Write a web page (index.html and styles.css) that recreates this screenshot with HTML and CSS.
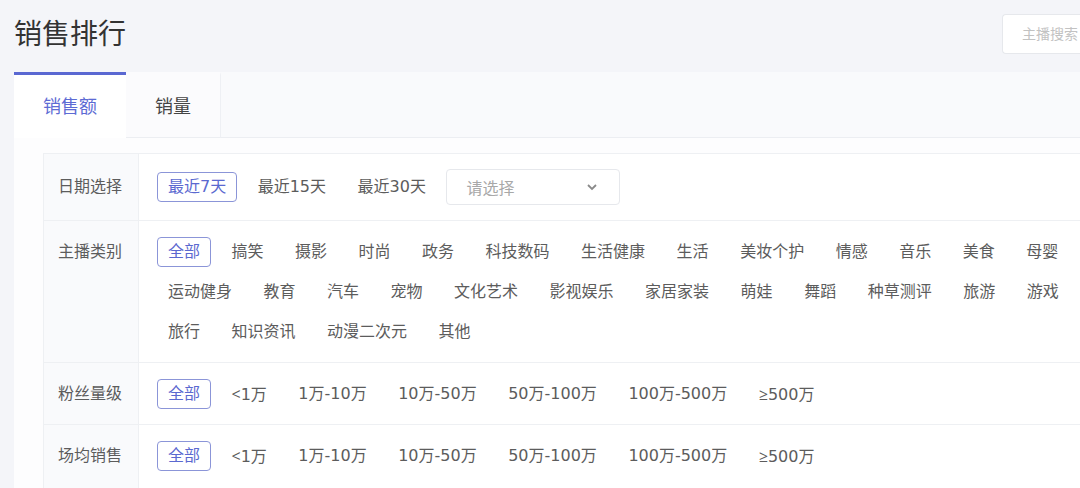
FILE: index.html
```html
<!DOCTYPE html>
<html lang="zh-CN">
<head>
    <meta charset="UTF-8">
    <meta name="viewport" content="width=device-width, initial-scale=1.0">
    <title>销售排行</title>
    <link rel="stylesheet" href="styles.css">
</head>
<body>
    <div class="page">
        <div class="header">
            <h1>销售排行</h1>
            <div class="search">主播搜索</div>
        </div>

        <div class="panel">
            <div class="tabs">
                <div class="tab active">销售额</div>
                <div class="tab">销量</div>
            </div>

            <div class="panel-body">
                <div class="filters">
                    <div class="row row-date">
                        <div class="label">日期选择</div>
                        <div class="options">
                            <span class="chip active">最近7天</span>
                            <span class="chip">最近15天</span>
                            <span class="chip">最近30天</span>
                            <div class="select">
                                <span>请选择</span>
                                <svg width="12" height="12" viewBox="0 0 12 12">
                                    <polyline points="2,4 6,8 10,4" fill="none" stroke="#8a8a8a" stroke-width="1.8"/>
                                </svg>
                            </div>
                        </div>
                    </div>
                    <div class="row">
                        <div class="label">主播类别</div>
                        <div class="options">
                            <span class="chip active">全部</span>
                            <span class="chip">搞笑</span>
                            <span class="chip">摄影</span>
                            <span class="chip">时尚</span>
                            <span class="chip">政务</span>
                            <span class="chip">科技数码</span>
                            <span class="chip">生活健康</span>
                            <span class="chip">生活</span>
                            <span class="chip">美妆个护</span>
                            <span class="chip">情感</span>
                            <span class="chip">音乐</span>
                            <span class="chip">美食</span>
                            <span class="chip">母婴</span>
                            <span class="chip">运动健身</span>
                            <span class="chip">教育</span>
                            <span class="chip">汽车</span>
                            <span class="chip">宠物</span>
                            <span class="chip">文化艺术</span>
                            <span class="chip">影视娱乐</span>
                            <span class="chip">家居家装</span>
                            <span class="chip">萌娃</span>
                            <span class="chip">舞蹈</span>
                            <span class="chip">种草测评</span>
                            <span class="chip">旅游</span>
                            <span class="chip">游戏</span>
                            <span class="chip">旅行</span>
                            <span class="chip">知识资讯</span>
                            <span class="chip">动漫二次元</span>
                            <span class="chip">其他</span>
                        </div>
                    </div>
                    <div class="row">
                        <div class="label">粉丝量级</div>
                        <div class="options">
                            <span class="chip active">全部</span>
                            <span class="chip"><span class="sym">&lt;</span>1万</span>
                            <span class="chip">1万-10万</span>
                            <span class="chip">10万-50万</span>
                            <span class="chip">50万-100万</span>
                            <span class="chip">100万-500万</span>
                            <span class="chip"><span class="sym">≥</span>500万</span>
                        </div>
                    </div>
                    <div class="row">
                        <div class="label">场均销售</div>
                        <div class="options">
                            <span class="chip active">全部</span>
                            <span class="chip"><span class="sym">&lt;</span>1万</span>
                            <span class="chip">1万-10万</span>
                            <span class="chip">10万-50万</span>
                            <span class="chip">50万-100万</span>
                            <span class="chip">100万-500万</span>
                            <span class="chip"><span class="sym">≥</span>500万</span>
                        </div>
                    </div>
                </div>
            </div>
        </div>
    </div>
</body>
</html>
```

FILE: styles.css
```css
body {
    margin: 0;
    background-color: #f4f5f9;
    font-family: "DejaVu Sans", "Noto Sans CJK SC", sans-serif;
    color: #5c5c5c;
    overflow: hidden;
}

.page {
    width: 1120px;
}

/* 顶部标题 + 搜索框 */
.header {
    display: flex;
    align-items: flex-start;
    justify-content: space-between;
    height: 72px;
    padding-left: 14px;
}
.header h1 {
    margin: 0;
    padding-top: 16px;
    font-size: 28px;
    line-height: 38px;
    font-weight: normal;
    color: #333;
}
.search {
    box-sizing: border-box;
    width: 118px;
    height: 40px;
    margin-top: 14px;
    padding-left: 19px;
    background-color: #fff;
    border: 1px solid #e6e8ec;
    border-right: none;
    border-radius: 4px 0 0 4px;
    font-size: 14px;
    line-height: 38px;
    color: #c2c2c2;
}

/* 内容面板 */
.panel {
    margin-left: 14px;
    background-color: #fdfdfe;
    height: 420px;
}
.tabs {
    display: flex;
    height: 65px;
    background-color: #f9fafc;
    border-bottom: 1px solid #eceef2;
}
.tab {
    box-sizing: border-box;
    padding: 0 29px;
    height: 66px;
    font-size: 18px;
    line-height: 64px;
    color: #444;
    border-top: 3px solid transparent;
    border-right: 1px solid #eef0f4;
    border-bottom: 1px solid #eceef2;
    background-color: #fbfbfd;
}
.tab.active {
    color: #5d6bd4;
    background-color: #fff;
    border-top-color: #5a68d2;
    border-right: none;
    border-bottom-color: #fff;
}

.panel-body {
    padding: 15px 20px 0 29px;
}

/* 筛选表格 */
.filters {
    background-color: #fff;
    border: 1px solid #eef0f3;
}
.row {
    display: flex;
    border-bottom: 1px solid #eef0f3;
}
.label {
    box-sizing: border-box;
    width: 95px;
    flex-shrink: 0;
    padding: 16px 0 15px 14px;
    background-color: #f9fafc;
    border-right: 1px solid #eef0f3;
    font-size: 16px;
    line-height: 30px;
    color: #5c5c5c;
}
.options {
    flex: 1;
    display: flex;
    flex-wrap: wrap;
    align-items: center;
    column-gap: 9.5px;
    row-gap: 10px;
    padding: 16px 0 15px 18px;
}
.row-date .label {
    padding-top: 18px;
}
.row-date .options {
    padding-top: 15px;
    padding-bottom: 15px;
}
.row:last-child .options {
    padding-bottom: 18px;
}

.chip {
    box-sizing: border-box;
    height: 30px;
    padding: 0 10px;
    border: 1px solid transparent;
    border-radius: 4px;
    font-size: 16px;
    line-height: 28px;
    color: #5c5c5c;
    white-space: nowrap;
}
.chip.active {
    color: #5b69d0;
    border-color: #8b95d8;
}
/* DejaVu 的 < ≥ 太宽，换窄一点的字体 */
.chip .sym {
    font-family: "Open Sans", sans-serif;
}

.select {
    box-sizing: border-box;
    display: flex;
    align-items: center;
    justify-content: space-between;
    width: 174px;
    height: 36px;
    padding: 0 21px 0 19px;
    border: 1px solid #e6e8ec;
    border-radius: 4px;
    font-size: 16px;
    color: #a8a8a8;
}
```
